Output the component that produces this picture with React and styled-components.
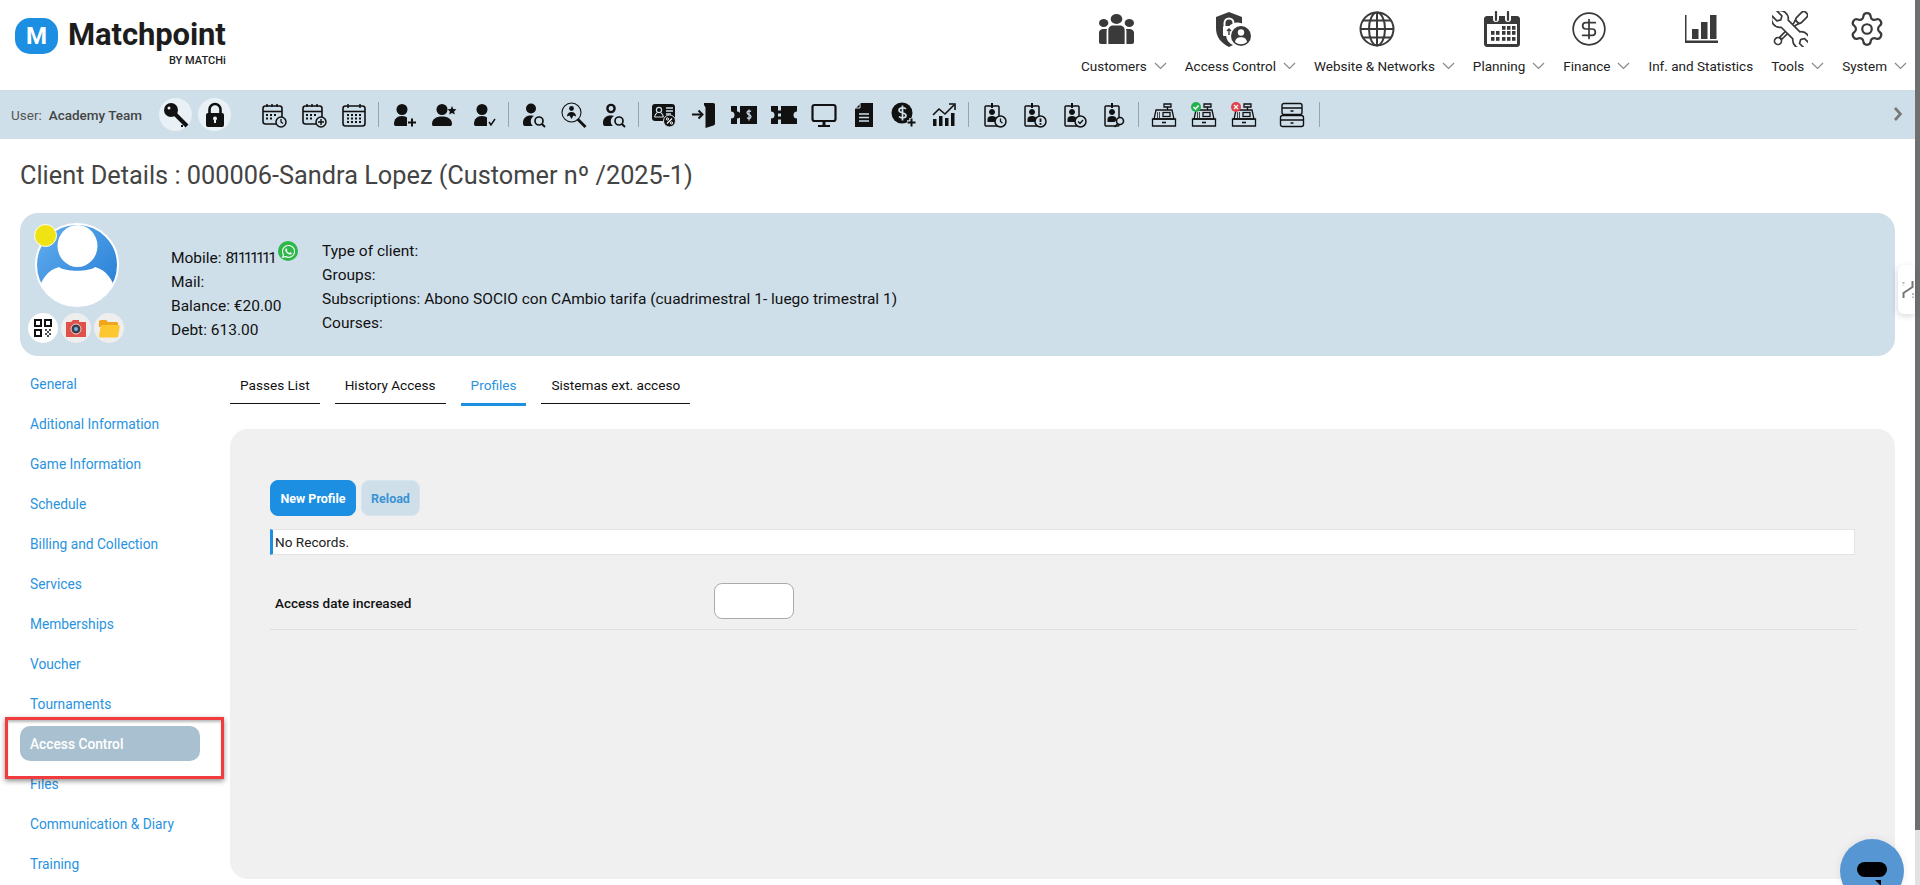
import React from 'react';
import styled, { createGlobalStyle } from 'styled-components';
import { Settings, CircleDollarSign } from 'lucide-react';
import { FaWhatsapp } from 'react-icons/fa';

const GlobalStyle = createGlobalStyle`
  html, body { margin: 0; padding: 0; height: 100%; overflow: hidden; background: #fff; }
  * { box-sizing: border-box; }
  body { font-family: Roboto, "Liberation Sans", sans-serif; font-size: 14px; color: #111; }
`;

const Page = styled.div`
  height: 100vh;
  display: flex;
  overflow: hidden;
`;

const Main = styled.div`
  flex: 1;
  min-width: 0;
  height: 100vh;
  overflow: hidden;
`;

const ScrollTrack = styled.div`
  width: 5px;
  flex: none;
  background: #e2e2e2;
`;

const ScrollThumb = styled.div`
  height: 830px;
  background: #6f6f6f;
`;

const Header = styled.header`
  height: 90px;
  display: flex;
  justify-content: space-between;
  padding: 0 8px 0 15px;
`;

const Logo = styled.div`
  display: flex;
  gap: 10px;
  padding-top: 18px;
`;

const LogoMark = styled.div`
  width: 43px;
  height: 36px;
  border-radius: 15px;
  background: #1c8fe2;
  color: #fff;
  font-weight: 700;
  font-size: 24px;
  line-height: 36px;
  text-align: center;
`;

const LogoWords = styled.div`
  display: flex;
  flex-direction: column;
  align-items: flex-end;
`;

const LogoName = styled.div`
  font-size: 31px;
  font-weight: 700;
  line-height: 34px;
  letter-spacing: -0.1px;
  color: #1d1d1d;
`;

const LogoBy = styled.div`
  font-size: 11px;
  font-weight: 500;
  line-height: 12px;
  margin-top: 3px;
  color: #222;
`;

const Nav = styled.nav`
  display: flex;
  gap: 18px;
`;

const NavItem = styled.div`
  display: flex;
  flex-direction: column;
  align-items: center;
  padding-top: 12px;
`;

const NavIcon = styled.div`
  height: 34px;
  display: flex;
  align-items: center;
  justify-content: center;
  color: #3a3a3a;
  padding-right: ${(p) => (p.$shifted ? 15 : 0)}px;
`;

const NavLabel = styled.div`
  display: flex;
  align-items: center;
  gap: 7px;
  margin-top: 11px;
  line-height: 18px;
  font-size: 13.5px;
  color: #222;
`;

const Toolbar = styled.div`
  height: 49px;
  background: #cfdfea;
  display: flex;
  align-items: center;
  padding-left: 11px;
  position: relative;
`;

const UserBlock = styled.div`
  width: 148px;
  font-size: 13.5px;
  color: #555;
  display: flex;
  gap: 7px;
`;

const UserName = styled.span`
  font-weight: 500;
  color: #444;
`;

const RoundTool = styled.div`
  width: 33px;
  height: 33px;
  border-radius: 50%;
  background: #e9f1f6;
  display: flex;
  align-items: center;
  justify-content: center;
  margin-right: 6px;
`;

const ToolCell = styled.div`
  width: 40px;
  height: 30px;
  flex: none;
  display: flex;
  align-items: center;
  justify-content: center;
  margin-left: ${(p) => p.$extra || 0}px;
  margin-right: ${(p) => (p.$extra ? 3 : 0)}px;
`;

const ToolSep = styled.div`
  width: 1px;
  height: 25px;
  background: #9aa3a9;
  margin: 0 4.5px;
  flex: none;
`;

const ToolRow = styled.div`
  display: flex;
  align-items: center;
  margin-left: 16.5px;
`;

const ToolNext = styled.div`
  position: absolute;
  right: 12px;
  top: 17px;
  color: #777;
  line-height: 0;
`;

const Title = styled.h1`
  margin: 0;
  height: 74px;
  display: flex;
  align-items: center;
  padding: 0 0 2px 20px;
  font-size: 25.3px;
  font-weight: 400;
  color: #444;
`;

const ClientCard = styled.section`
  height: 143px;
  margin: 0 20px;
  background: #cfdfea;
  border-radius: 18px;
  display: flex;
  padding-left: 9px;
`;

const AvatarCol = styled.div`
  width: 93px;
  padding-top: 10px;
  display: flex;
  flex-direction: column;
  align-items: center;
`;

const AvatarWrap = styled.div`
  position: relative;
  margin-left: 3px;
  width: 84px;
  height: 84px;
`;

const StatusDot = styled.div`
  position: absolute;
  left: -1px;
  top: 1px;
  width: 23px;
  height: 23px;
  border-radius: 50%;
  background: #efe314;
  border: 1.5px solid #fff;
`;

const AvatarActions = styled.div`
  display: flex;
  gap: 3px;
  margin-top: 6px;
`;

const RoundAction = styled.div`
  width: 30px;
  height: 30px;
  border-radius: 50%;
  background: ${(p) => p.$bg || '#eeeeee'};
  display: flex;
  align-items: center;
  justify-content: center;
`;

const InfoCol = styled.div`
  width: ${(p) => p.$width}px;
  margin-left: ${(p) => p.$left || 0}px;
  padding-top: ${(p) => p.$top}px;
`;

const InfoRow = styled.div`
  position: relative;
  height: 24px;
  line-height: 24px;
  font-size: 15.5px;
  color: #111;
  white-space: nowrap;
`;

const PhoneNumber = styled.span`
  letter-spacing: -2.6px;
`;

const WhatsBadge = styled.span`
  position: absolute;
  left: 107px;
  top: -5px;
  width: 20px;
  height: 20px;
  border-radius: 50%;
  background: #2fb84a;
  color: #fff;
  display: flex;
  align-items: center;
  justify-content: center;
`;

const Body = styled.div`
  display: flex;
  height: 523px;
  padding-right: 20px;
`;

const Sidebar = styled.aside`
  width: 230px;
  flex: none;
  padding: 10px 30px 0 20px;
  position: relative;
  display: flex;
  flex-direction: column;
  gap: 5px;
`;

const SideLink = styled.a`
  height: 35px;
  flex: none;
  line-height: 36px;
  padding-left: 10px;
  border-radius: 10px;
  font-size: 13.75px;
  color: ${(p) => (p.$active ? '#fff' : '#2a93e0')};
  font-weight: ${(p) => (p.$active ? 500 : 400)};
  background: ${(p) => (p.$active ? '#a9c0d0' : 'transparent')};
`;

const Callout = styled.div`
  position: absolute;
  left: 5px;
  top: 361px;
  width: 219px;
  height: 62px;
  border: 3px solid #f23b3e;
  box-shadow: 0 2px 5px rgba(0, 0, 0, 0.45), inset 0 3px 3px -1px rgba(0, 0, 0, 0.28);
`;

const Content = styled.main`
  flex: 1;
  min-width: 0;
`;

const Tabs = styled.div`
  height: 50px;
  display: flex;
  align-items: flex-start;
  gap: 15px;
  padding-top: 19px;
  margin-bottom: 23px;
`;

const Tab = styled.div`
  padding: 0 10px 8px;
  line-height: 20px;
  font-size: 13.6px;
  color: ${(p) => (p.$active ? '#2a93e0' : '#111')};
  border-bottom: ${(p) => (p.$active ? '3px solid #1c8fe2' : '1px solid #111')};
`;

const Panel = styled.div`
  height: 450px;
  background: #f0f0f0;
  border-radius: 18px;
  padding: 51px 40px 0;
`;

const ButtonRow = styled.div`
  display: flex;
  gap: 5px;
`;

const PanelButton = styled.button`
  height: 36px;
  width: ${(p) => p.$width}px;
  padding: 0;
  border-radius: 8px;
  font-family: inherit;
  font-size: 12.5px;
  font-weight: 700;
  border: 1px solid ${(p) => (p.$primary ? '#1c8fe2' : '#d9e5ee')};
  background: ${(p) => (p.$primary ? '#1c8fe2' : '#cfdfea')};
  color: ${(p) => (p.$primary ? '#fff' : '#3a93d5')};
`;

const NoRecords = styled.div`
  height: 26px;
  margin-top: 13px;
  line-height: 24px;
  background: #fff;
  border: 1px solid #e3e3e3;
  border-left: 3px solid #1c8fe2;
  padding-left: 2px;
  font-size: 13.6px;
  color: #222;
`;

const FieldRow = styled.div`
  display: flex;
  align-items: center;
  margin: 20px -2px 0 0;
  padding: 8px 0 10px;
  border-bottom: 1px solid #dfdfdf;
`;

const FieldLabel = styled.label`
  width: 444px;
  padding: 4px 0 0 5px;
  font-size: 13.5px;
  font-weight: 500;
  color: #111;
`;

const FieldInput = styled.input`
  width: 80px;
  height: 36px;
  background: #fff;
  border: 1px solid #aaa;
  border-radius: 8px;
`;

const SideTab = styled.div`
  position: fixed;
  right: 5px;
  top: 265px;
  width: 17px;
  height: 49px;
  background: #fff;
  border-radius: 6px 0 0 6px;
  box-shadow: -1px 2px 6px rgba(0, 0, 0, 0.15);
  display: flex;
  align-items: center;
  justify-content: flex-end;
`;

const ChatBubble = styled.div`
  position: fixed;
  left: 1840px;
  top: 839px;
  width: 64px;
  height: 64px;
  border-radius: 50%;
  background: #5596d3;
  box-shadow: 0 0 10px rgba(0, 0, 0, 0.08);
  padding-top: 23px;
`;

const ChatPill = styled.div`
  position: relative;
  width: 30px;
  height: 15px;
  margin-left: 17px;
  border-radius: 8px;
  background: #000;
  &::after {
    content: '';
    position: absolute;
    right: 6px;
    top: 18px;
    border-top: 6px solid #000;
    border-left: 6px solid transparent;
  }
`;

const BAND = '#cfdfea';

const Chevron = () => (
  <svg width="13" height="8" viewBox="0 0 13 8" fill="none" stroke="#8a8a8a" strokeWidth="1.2">
    <path d="M1 1l5.500 5.500L12 1" />
  </svg>
);

/* header icons */
const PeopleIcon = () => (
  <svg width="35" height="30" viewBox="3 0 30 30" preserveAspectRatio="none" fill="currentColor">
    <circle cx="18" cy="5" r="5" />
    <circle cx="7" cy="9" r="4" />
    <circle cx="29" cy="9" r="4" />
    <path d="M11 30V16c0-3 2-4.500 4-4.500h6c2 0 4 1.500 4 4.500v14z" />
    <path d="M9.500 30H5c-1.500 0-2-1-2-2v-9c0-3 2-4 4-4h3c-.5 1-.5 1.500-.5 2z" />
    <path d="M26.500 30H31c1.500 0 2-1 2-2v-9c0-3-2-4-4-4h-3c.5 1 .5 1.500.5 2z" />
  </svg>
);

const ShieldUserIcon = () => (
  <svg width="36" height="36" viewBox="0 0 36 36" fill="currentColor">
    <path d="M14 1L27 6v6.500a11 11 0 0 0-9 21.500c-1 .5-3 1.500-4 2C6 32 1 26 1 17V6z" />
    <path d="M9.500 15v-3a4.500 4.500 0 0 1 9 0v3" fill="none" stroke="#fff" strokeWidth="2" />
    <rect x="8" y="15" width="12" height="10" rx="1" fill="#fff" />
    <path d="M14 24v-6m-2 2l2-2 2 2" stroke="#3a3a3a" strokeWidth="1.400" fill="none" />
    <circle cx="26" cy="25" r="10" />
    <circle cx="26" cy="21.500" r="3.200" fill="#fff" />
    <path d="M20 31c.5-3.500 3-4.800 6-4.800s5.500 1.300 6 4.800a9 9 0 0 1-12 0z" fill="#fff" />
  </svg>
);

const GlobeIcon = () => (
  <svg width="36" height="36" viewBox="0 0 36 36" fill="none" stroke="currentColor" strokeWidth="2">
    <circle cx="18" cy="18" r="16.500" />
    <ellipse cx="18" cy="18" rx="8" ry="16.500" />
    <path d="M18 1.500v33M1.500 18h33M4 9.500h28M4 26.500h28" />
  </svg>
);

const PlanningIcon = () => (
  <svg width="36" height="36" viewBox="0 0 36 36" fill="currentColor">
    <path d="M3 5h6v3a3 3 0 0 0 6 0V5h6v3a3 3 0 0 0 6 0V5h6c1.500 0 3 1 3 3v25c0 2-1.500 3-3 3H3c-1.500 0-3-1-3-3V8c0-2 1.500-3 3-3z" />
    <rect x="3" y="13" width="30" height="20" fill="#fff" />
    <path d="M12 1v8M24 1v8" stroke="currentColor" strokeWidth="2.200" strokeLinecap="round" />
    {[
      [18, 15], [23, 15], [28, 15],
      [7, 20], [12, 20], [18, 20], [23, 20], [28, 20],
      [7, 26], [12, 26], [18, 26], [23, 26], [28, 26],
    ].map(([x, y]) => (
      <rect key={`${x}-${y}`} x={x} y={y} width="3.500" height="3.800" />
    ))}
  </svg>
);

const StatsIcon = () => (
  <svg width="34" height="28" viewBox="0 0 34 28" fill="currentColor">
    <path d="M1 0h1.500v25.500H34V28H1z" />
    <rect x="8" y="14" width="6.500" height="10" />
    <rect x="17" y="7" width="6.500" height="17" />
    <rect x="26" y="0" width="6.500" height="24" />
  </svg>
);

const ToolsIcon = () => (
  <svg width="36" height="36" viewBox="0 0 36 36" fill="#fff" stroke="currentColor" strokeWidth="1.700" strokeLinejoin="round">
    <g transform="rotate(45 18 18)">
      <rect x="14.500" y="-5" width="7" height="13" rx="3" />
      <path d="M15.500 8h5l-1 3v20h-3V11z" />
      <circle cx="18" cy="35" r="3.500" />
    </g>
    <g transform="rotate(-45 18 18)">
      <path d="M14.500 -4V3l3.500 2 3.500-2v-7a8.500 8.500 0 0 1 1.500 14.500V27a8.500 8.500 0 0 1-1.500 14.500V35l-3.500-2-3.500 2v6.500A8.500 8.500 0 0 1 13 27V10.500A8.500 8.500 0 0 1 14.500 -4z" />
    </g>
  </svg>
);

/* toolbar icons */
const Badge = ({ kind, cx = 20, cy = 20, r = 5.2 }) => (
  <g>
    <circle cx={cx} cy={cy} r={r} fill={BAND} stroke="#111" strokeWidth="1.500" />
    {kind === 'clock' && <path d={`M${cx} ${cy - 3}v3l2 1.500`} fill="none" stroke="#111" strokeWidth="1.300" />}
    {kind === 'plus' && <path d={`M${cx - 3} ${cy}h6M${cx} ${cy - 3}v6`} fill="none" stroke="#111" strokeWidth="1.400" />}
    {kind === 'warn' && <path d={`M${cx} ${cy - 3}v3.500M${cx} ${cy + 1.500}v1.800`} fill="none" stroke="#111" strokeWidth="1.800" />}
    {kind === 'check' && <path d={`M${cx - 2.500} ${cy}l2 2 3-3.500`} fill="none" stroke="#111" strokeWidth="1.300" />}
  </g>
);

const CalendarIcon = ({ kind }) => (
  <svg width="26" height="26" viewBox="0 0 26 26" fill="none" stroke="#111">
    <rect x="2" y="4" width={kind ? 19 : 22} height={kind ? 18 : 20} rx="2.500" strokeWidth="1.600" />
    <path d={`M2 9.500h${kind ? 19 : 22}`} strokeWidth="1.600" />
    <path d={kind ? 'M6 2v3M11 2v3M16 2v3' : 'M7 2v4M19 2v4'} strokeWidth="1.500" />
    <path
      d={kind ? 'M5 13h2M9 13h2M13 13h2M5 16.500h2M9 16.500h2' : 'M6 13h2M10 13h2M14 13h2M18 13h2M6 16.500h2M10 16.500h2M14 16.500h2M18 16.500h2M6 20h2M10 20h2M14 20h2M18 20h2'}
      strokeWidth="2"
    />
    {kind && <Badge kind={kind} cx={20} cy={20} r={5} />}
  </svg>
);

const UserIcon = ({ mark }) => {
  const wide = mark === 'star';
  return (
    <svg width="26" height="26" viewBox="0 0 26 26" fill="#111">
      <circle cx="11" cy="7.500" r="5.500" />
      {wide ? (
        <path d="M1 22c0-5 4-7.500 10-7.500S21 17 21 22c0 1.500-1 2-2 2H3c-1.500 0-2-.5-2-2z" />
      ) : (
        <path d="M3 22c0-5 3-8 8-8 2.500 0 4 .8 5 1.500V24H5c-1.500 0-2-.7-2-2z" />
      )}
      {mark === 'plus' && <path d="M17 20.500h8M21 16.500v8" stroke="#111" strokeWidth="2" />}
      {mark === 'check' && <path d="M18 20l2 3 4-6" stroke="#111" strokeWidth="1.500" fill="none" />}
      {mark === 'star' && <path d="M21 4l1.300 3 3.200.3-2.400 2.100.7 3.100L21 10.900l-2.800 1.600.7-3.100-2.400-2.100 3.200-.3z" />}
    </svg>
  );
};

const UserSearchIcon = ({ hollow }) => (
  <svg width="26" height="26" viewBox="0 0 26 26" fill="#111">
    <circle cx="10" cy="6.500" r={hollow ? 3.600 : 5} fill={hollow ? 'none' : '#111'} stroke="#111" strokeWidth={hollow ? 2.400 : 0} />
    <path d="M2 21c0-5 3-7.500 8-7.500 1.500 0 2.500.2 3 .5a6 6 0 0 0-1 10H4c-1.500 0-2-1-2-3z" />
    <circle cx="18" cy="19" r="4" fill="none" stroke="#111" strokeWidth="1.700" />
    <path d="M21 22l3 3" stroke="#111" strokeWidth="2" />
  </svg>
);

const AwardSearchIcon = () => (
  <svg width="26" height="26" viewBox="0 0 26 26" fill="#111">
    <circle cx="10.500" cy="10.500" r="9.500" fill="none" stroke="#111" strokeWidth="1.100" />
    <circle cx="10.500" cy="6.500" r="2.400" />
    <path d="M6 14.500c0-3 1.800-4.500 4.500-4.500s4.500 1.500 4.500 4.500l-2.500-1-2 3.500-2-3.500z" />
    <path d="M16.500 17l8 8" stroke="#111" strokeWidth="2.800" />
  </svg>
);

const IdPercentIcon = () => (
  <svg width="26" height="26" viewBox="0 0 26 26">
    <rect x="1" y="2" width="23" height="17" rx="3" fill="#111" />
    <circle cx="8" cy="8" r="2.600" fill="none" stroke={BAND} strokeWidth="1.200" />
    <path d="M3.500 15c.5-2.500 1.500-3.500 2.500-4M12.500 15c-.5-2.500-1.500-3.500-2.500-4M3.500 15h9" fill="none" stroke={BAND} strokeWidth="1.100" />
    <path d="M15 6h7M15 9h7M15 12h5" stroke={BAND} strokeWidth="1.300" />
    <circle cx="18.500" cy="19" r="6" fill="#111" stroke={BAND} strokeWidth="1" />
    <path d="M21 16.500l-5 5" stroke="#fff" strokeWidth="1.200" />
    <circle cx="16.500" cy="17" r="1.100" fill="none" stroke="#fff" />
    <circle cx="20.500" cy="21" r="1.100" fill="none" stroke="#fff" />
  </svg>
);

const DoorInIcon = () => (
  <svg width="26" height="26" viewBox="0 0 26 26" fill="#111">
    <path d="M13 1h9c1.500 0 2 .7 2 2v18.500c0 1-.5 1.500-1.500 2L14.500 26V5.500L13 3z" />
    <path d="M1 12.500h10" stroke="#111" strokeWidth="2" />
    <path d="M7.500 8.500l4 4-4 4" stroke="#111" strokeWidth="2" fill="none" />
  </svg>
);

const TicketIcon = ({ dollar }) => (
  <svg width="26" height="26" viewBox="0 0 26 26" fill="#111">
    {dollar ? (
      <>
        <path d="M0 4h6v5.500a3.500 3.500 0 0 1 0 7V22H0v-5.500a3.500 3.500 0 0 0 0-7z" />
        <path d="M9 4h17v18H9z" />
        <path d="M20 9.500c-1-1-4-1-4 1.200 0 2.500 4 1.300 4 3.800 0 2.300-3 2.300-4 1.200M18 7.500v11" stroke={BAND} strokeWidth="1.200" fill="none" />
      </>
    ) : (
      <>
        <path d="M0 4h7v4.500h3V4h16v5.500a3.500 3.500 0 0 0 0 7V22H10v-4.500H7V22H0v-5.500a3.500 3.500 0 0 0 0-7z" />
        <path d="M7 11.500h3v3H7z" fill={BAND} />
      </>
    )}
  </svg>
);

const MonitorIcon = () => (
  <svg width="26" height="26" viewBox="0 0 26 26" fill="none" stroke="#111">
    <rect x="1.500" y="3" width="23" height="16" rx="2" strokeWidth="2.200" />
    <path d="M13 19v4" strokeWidth="3" />
    <path d="M7 24h12" strokeWidth="2" />
  </svg>
);

const DocIcon = () => (
  <svg width="26" height="26" viewBox="0 0 26 26" fill="#111">
    <path d="M10 1h12v24H4V7z" />
    <path d="M9 1.500V6H4.500" stroke={BAND} strokeWidth="1" fill="none" />
    <path d="M8 12h10M8 15.500h10M8 19h10" stroke={BAND} strokeWidth="1.500" />
  </svg>
);

const DollarPlusIcon = () => (
  <svg width="26" height="26" viewBox="0 0 26 26" fill="#111">
    <circle cx="11" cy="11" r="10.500" />
    <path d="M15 7c-2-2-7-1.500-7 1.200 0 3.300 7 1.800 7 5.300 0 2.700-5 3-7 1M11.500 3.500v15" stroke={BAND} strokeWidth="1.700" fill="none" />
    <path d="M16 20.500h9M20.500 16v9" stroke={BAND} strokeWidth="4.500" />
    <path d="M16.500 20.500h8M20.500 16.500v8" stroke="#111" strokeWidth="2" />
  </svg>
);

const ChartIcon = () => (
  <svg width="26" height="26" viewBox="0 0 26 26" fill="#111">
    <rect x="2" y="17" width="3.500" height="7" />
    <rect x="8" y="14" width="3.500" height="10" />
    <rect x="14" y="16" width="3.500" height="8" />
    <rect x="20" y="11" width="3.500" height="13" />
    <path d="M2 13l6-6 6 5 9-9" stroke="#111" strokeWidth="1.600" fill="none" />
    <path d="M18 2h6v6" stroke="#111" strokeWidth="1.600" fill="none" />
  </svg>
);

const ClipIcon = ({ kind }) => (
  <svg width="26" height="26" viewBox="0 0 26 26" fill="none" stroke="#111">
    <rect x="4" y="4" width="14" height="20" rx="1" strokeWidth="1.500" />
    <path d="M11 1v5" strokeWidth="2" />
    <circle cx="11" cy="10" r="2.500" fill="#111" />
    <path d="M6.500 20v-3c0-2 2-3 4.500-3s4.500 1 4.500 3v1l-2 2z" fill="#111" stroke="none" />
    {kind === 'search' ? (
      <>
        <circle cx="19" cy="19" r="3.500" fill={BAND} strokeWidth="1.600" />
        <path d="M16.500 22l-3 3" strokeWidth="1.600" />
      </>
    ) : (
      <Badge kind={kind} cx={19.500} cy={19.500} r={5.500} />
    )}
  </svg>
);

const RegisterIcon = ({ status }) => (
  <svg width="26" height="26" viewBox="0 0 26 26" fill="none" stroke="#111" strokeWidth="1.300">
    <path d="M13 2h7v3h-7zM16.500 5v3" />
    <path d="M5 8h16l2 9H3z" />
    <path d="M1.500 17h23v7h-23z" />
    <path d="M11 20.500h4" strokeWidth="1.600" />
    <rect x="12" y="10.500" width="7" height="4" />
    <path d="M6 11h3M6 13h3M6 15h3" strokeWidth="1.300" strokeDasharray="1 1" />
    {status === 'ok' && (
      <>
        <circle cx="5" cy="5" r="5" fill="#23b14d" stroke="none" />
        <path d="M2.500 5l2 2 3-3.500" stroke="#fff" strokeWidth="1.500" />
      </>
    )}
    {status === 'no' && (
      <>
        <circle cx="5" cy="5" r="5" fill="#e3414a" stroke="none" />
        <path d="M3 3l4 4M7 3l-4 4" stroke="#fff" strokeWidth="1.300" />
      </>
    )}
  </svg>
);

const DrawerIcon = () => (
  <svg width="26" height="26" viewBox="0 0 26 26" fill="none" stroke="#111" strokeWidth="1.400">
    <rect x="3" y="1.500" width="20" height="11" rx="2" />
    <rect x="1.500" y="13.500" width="23" height="11" rx="2" />
    <path d="M3 6h20M1.500 18h23" />
    <path d="M11.500 9h3M11.500 21h3" strokeWidth="1.600" />
  </svg>
);

const KeyIcon = () => (
  <svg width="26" height="26" viewBox="0 0 26 26" fill="#111">
    <circle cx="8" cy="8" r="7" />
    <circle cx="6" cy="6" r="1.500" fill="#e9f1f6" />
    <path d="M12 12l12 12" stroke="#111" strokeWidth="4" />
    <path d="M20 24l-2 0" stroke="#111" strokeWidth="2" />
  </svg>
);

const LockIcon = () => (
  <svg width="22" height="26" viewBox="0 0 22 26" fill="#111">
    <path d="M5.500 12V7.500a5.500 5.500 0 0 1 11 0V12" fill="none" stroke="#111" strokeWidth="2.600" />
    <rect x="2" y="11" width="18" height="14" rx="2" />
    <circle cx="11" cy="16.500" r="2" fill="#e9f1f6" />
    <path d="M11 17v4" stroke="#e9f1f6" strokeWidth="2" />
  </svg>
);

const AvatarArt = () => (
  <svg width="84" height="84" viewBox="0 0 84 84">
    <defs>
      <linearGradient id="avatarBlue" x1="0" y1="0" x2="1" y2="1">
        <stop offset="0" stopColor="#63aef0" />
        <stop offset="1" stopColor="#217bd2" />
      </linearGradient>
      <clipPath id="avatarClip">
        <circle cx="42" cy="42" r="40.500" />
      </clipPath>
    </defs>
    <circle cx="42" cy="42" r="41" fill="url(#avatarBlue)" stroke="#fff" strokeWidth="2" />
    <g clipPath="url(#avatarClip)" fill="#fff">
      <ellipse cx="42.500" cy="23" rx="20" ry="21" />
      <path d="M4 84V68c2-12 9-21 20-24 6 5 30 5 36 0 11 3 18 12 20 24v16z" />
    </g>
  </svg>
);

const QrIcon = () => (
  <svg width="18" height="18" viewBox="0 0 18 18" fill="none" stroke="#111" strokeWidth="2">
    <rect x="1" y="1" width="6" height="6" />
    <rect x="11" y="1" width="6" height="6" />
    <rect x="1" y="11" width="6" height="6" />
    <path d="M11 11h2M15 11h2M13 13h2M11 15h2M15 15h2M13 17h2" strokeWidth="1.500" />
  </svg>
);

const CameraIcon = () => (
  <svg width="22" height="20" viewBox="0 0 22 20">
    <path d="M1 4h5l2-2h6v2h7v15H1z" fill="#e0514a" />
    <circle cx="11" cy="11" r="5" fill="#3a3f4b" stroke="#f2d5d2" strokeWidth="1" />
    <circle cx="11" cy="11" r="2" fill="#7fb2dd" />
  </svg>
);

const FolderIcon = () => (
  <svg width="22" height="20" viewBox="0 0 22 20">
    <path d="M1 4c0-1 .5-2 2-2h5l2 2h8c1 0 2 0 2 2v3H1z" fill="#f0a51e" />
    <path d="M3 7h17c1 0 2 .5 1.700 2l-1.500 9c-.2 1-1 1.500-2 1.500H3c-1.500 0-2-.5-2-2z" fill="#fdc82f" />
  </svg>
);

const SwitchIcon = () => (
  <svg width="13" height="18" viewBox="0 0 13 18" fill="none">
    <path d="M1.500 17v-5l9-6V0" stroke="#777" strokeWidth="2" />
    <path d="M1.500 1v4M11 12v5" stroke="#bbb" strokeWidth="2" strokeDasharray="2 1.500" />
  </svg>
);

const NAV_ITEMS = [
  { label: 'Customers', icon: <PeopleIcon /> },
  { label: 'Access Control', icon: <ShieldUserIcon /> },
  { label: 'Website & Networks', icon: <GlobeIcon /> },
  { label: 'Planning', icon: <PlanningIcon /> },
  { label: 'Finance', icon: <CircleDollarSign size={38} strokeWidth={1.1} /> },
  { label: 'Inf. and Statistics', icon: <StatsIcon />, noMenu: true },
  { label: 'Tools', icon: <ToolsIcon /> },
  { label: 'System', icon: <Settings size={38} strokeWidth={1.4} /> },
];

const TOOL_GROUPS = [
  [<CalendarIcon kind="clock" />, <CalendarIcon kind="plus" />, <CalendarIcon />],
  [<UserIcon mark="plus" />, <UserIcon mark="star" />, <UserIcon mark="check" />],
  [<UserSearchIcon />, <AwardSearchIcon />, <UserSearchIcon hollow />],
  [
    <IdPercentIcon />,
    <DoorInIcon />,
    <TicketIcon dollar />,
    <TicketIcon />,
    <MonitorIcon />,
    <DocIcon />,
    <DollarPlusIcon />,
    <ChartIcon />,
  ],
  [<ClipIcon kind="clock" />, <ClipIcon kind="warn" />, <ClipIcon kind="check" />, <ClipIcon kind="search" />],
];

const REGISTERS = [<RegisterIcon />, <RegisterIcon status="ok" />, <RegisterIcon status="no" />];

const SIDE_LINKS = [
  'General',
  'Aditional Information',
  'Game Information',
  'Schedule',
  'Billing and Collection',
  'Services',
  'Memberships',
  'Voucher',
  'Tournaments',
  'Access Control',
  'Files',
  'Communication & Diary',
  'Training',
];

const TABS = ['Passes List', 'History Access', 'Profiles', 'Sistemas ext. acceso'];

function App() {
  return (
    <Page>
      <GlobalStyle />
      <Main>
        <Header>
          <Logo>
            <LogoMark>M</LogoMark>
            <LogoWords>
              <LogoName>Matchpoint</LogoName>
              <LogoBy>BY MATCHi</LogoBy>
            </LogoWords>
          </Logo>
          <Nav>
            {NAV_ITEMS.map((item) => (
              <NavItem key={item.label}>
                <NavIcon $shifted={!item.noMenu}>{item.icon}</NavIcon>
                <NavLabel>
                  {item.label}
                  {!item.noMenu && <Chevron />}
                </NavLabel>
              </NavItem>
            ))}
          </Nav>
        </Header>

        <Toolbar>
          <UserBlock>
            User: <UserName>Academy Team</UserName>
          </UserBlock>
          <RoundTool><KeyIcon /></RoundTool>
          <RoundTool><LockIcon /></RoundTool>
          <ToolRow>
            {TOOL_GROUPS.map((group, g) => (
              <React.Fragment key={g}>
                {group.map((icon, i) => (
                  <ToolCell key={i}>{icon}</ToolCell>
                ))}
                <ToolSep />
              </React.Fragment>
            ))}
            {REGISTERS.map((icon, i) => (
              <ToolCell key={i}>{icon}</ToolCell>
            ))}
            <ToolCell $extra={8}><DrawerIcon /></ToolCell>
            <ToolSep />
          </ToolRow>
          <ToolNext>
            <svg width="10" height="14" viewBox="0 0 10 14" fill="none" stroke="#777" strokeWidth="2.600">
              <path d="M2 1l5.500 6L2 13" />
            </svg>
          </ToolNext>
        </Toolbar>

        <Title>Client Details : 000006-Sandra Lopez (Customer nº /2025-1)</Title>

        <ClientCard>
          <AvatarCol>
            <AvatarWrap>
              <AvatarArt />
              <StatusDot />
            </AvatarWrap>
            <AvatarActions>
              <RoundAction $bg="#fff"><QrIcon /></RoundAction>
              <RoundAction><CameraIcon /></RoundAction>
              <RoundAction><FolderIcon /></RoundAction>
            </AvatarActions>
          </AvatarCol>
          <InfoCol $left={49} $width={151} $top={33}>
            <InfoRow>
              Mobile: <PhoneNumber>81111111</PhoneNumber>
              <WhatsBadge><FaWhatsapp size={15} /></WhatsBadge>
            </InfoRow>
            <InfoRow>Mail:</InfoRow>
            <InfoRow>Balance: €20.00</InfoRow>
            <InfoRow>Debt: 613.00</InfoRow>
          </InfoCol>
          <InfoCol $width={700} $top={26}>
            <InfoRow>Type of client:</InfoRow>
            <InfoRow>Groups:</InfoRow>
            <InfoRow>Subscriptions: Abono SOCIO con CAmbio tarifa (cuadrimestral 1- luego trimestral 1)</InfoRow>
            <InfoRow>Courses:</InfoRow>
          </InfoCol>
        </ClientCard>

        <Body>
          <Sidebar>
            {SIDE_LINKS.map((link) => (
              <SideLink key={link} $active={link === 'Access Control'}>{link}</SideLink>
            ))}
            <Callout />
          </Sidebar>
          <Content>
            <Tabs>
              {TABS.map((tab) => (
                <Tab key={tab} $active={tab === 'Profiles'}>{tab}</Tab>
              ))}
            </Tabs>
            <Panel>
              <ButtonRow>
                <PanelButton $primary $width={86}>New Profile</PanelButton>
                <PanelButton $width={59}>Reload</PanelButton>
              </ButtonRow>
              <NoRecords>No Records.</NoRecords>
              <FieldRow>
                <FieldLabel>Access date increased</FieldLabel>
                <FieldInput />
              </FieldRow>
            </Panel>
          </Content>
        </Body>
      </Main>
      <ScrollTrack><ScrollThumb /></ScrollTrack>

      <SideTab><SwitchIcon /></SideTab>
      <ChatBubble><ChatPill /></ChatBubble>
    </Page>
  );
}

export default App;
